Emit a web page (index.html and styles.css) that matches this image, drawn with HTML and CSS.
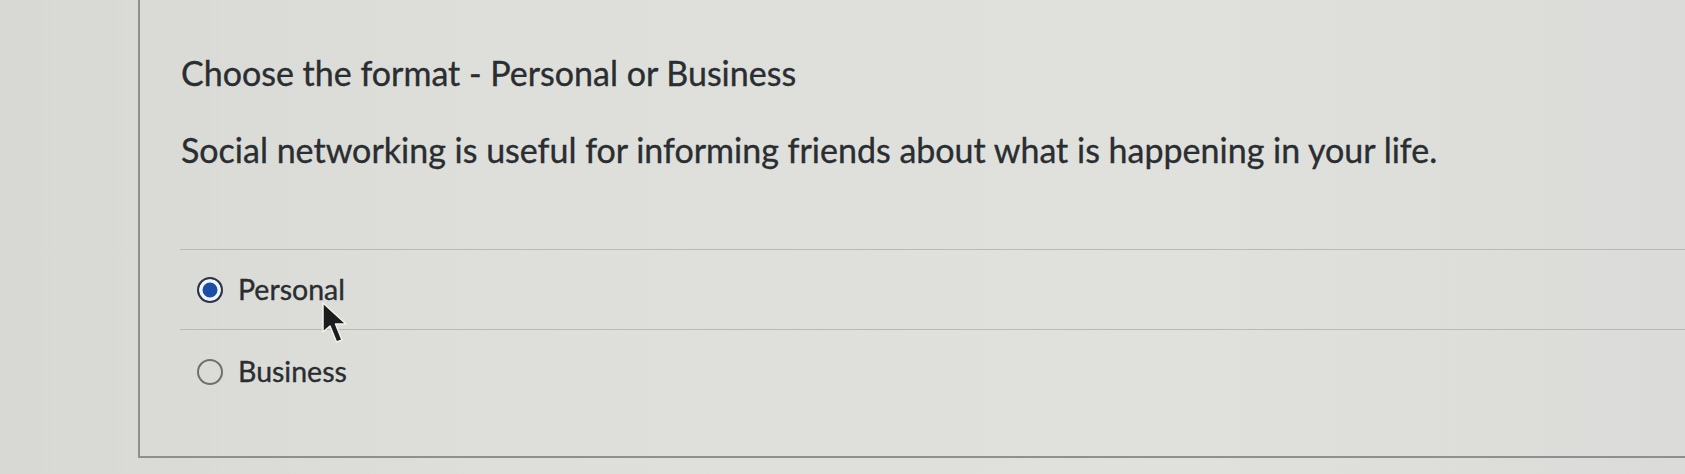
FILE: index.html
```html
<!DOCTYPE html>
<html lang="en">
<head>
<meta charset="utf-8">
<title>Quiz question</title>
<link rel="stylesheet" href="styles.css">
</head>
<body>
<div class="page">
  <div class="question">
    <div class="q-text">
      <p class="q-title">Choose the format - Personal or Business</p>
      <p class="q-body">Social networking is useful for informing friends about what is happening in your life.</p>
    </div>
    <div class="answers">
      <label class="answer">
        <span class="radio checked"></span>
        <span class="label">Personal</span>
      </label>
      <label class="answer">
        <span class="radio"></span>
        <span class="label">Business</span>
      </label>
    </div>
  </div>
  <svg class="cursor" width="30" height="46" viewBox="0 0 30 46">
    <path d="M2 2 L2 31 L9 25 L15.5 41 L21 39 L14.5 23 L25 23 Z" fill="#1c1c1e" stroke="#f2f2ee" stroke-width="1.5" stroke-linejoin="round"/>
  </svg>
</div>
</body>
</html>
```
FILE: styles.css
```css
html, body {
  margin: 0;
  padding: 0;
}
body {
  width: 1685px;
  height: 474px;
  overflow: hidden;
  background: linear-gradient(90deg, #d8d9d4 0%, #dedfda 30%, #e0e1dc 70%, #dbdcd9 100%);
  font-family: Lato, "Open Sans", sans-serif;
  color: #2a2d31;
  -webkit-text-stroke: 0.35px #2a2d31;
}
.page {
  position: relative;
  height: 474px;
  padding-left: 138px;
  box-sizing: border-box;
}
.question {
  height: 458px;
  box-sizing: border-box;
  border-left: 2px solid #8e908e;
  border-bottom: 2px solid #8e908e;
  padding-left: 40px;
  display: flex;
  flex-direction: column;
}
.q-text {
  padding-top: 51px;
  height: 249px;
  box-sizing: border-box;
  padding-left: 1px;
}
.q-title {
  margin: 0;
  font-size: 34px;
  line-height: 44px;
}
.q-body {
  margin: 33px 0 0;
  font-size: 34px;
  line-height: 44px;
}
.answers {
  display: flex;
  flex-direction: column;
}
.answer {
  display: flex;
  align-items: center;
  gap: 15px;
  height: 79px;
  padding-left: 17px;
  border-top: 1.5px solid #b9bab5;
}
.answer + .answer {
  height: 84px;
}
.radio {
  width: 22px;
  height: 22px;
  border-radius: 50%;
  border: 2px solid #6e6f70;
  box-sizing: content-box;
  flex: none;
}
.radio.checked {
  border: 2.5px solid #2b3544;
  background: #1d4ea6;
  box-shadow: inset 0 0 0 3.5px #f3f4f6;
}
.label {
  font-size: 28.5px;
  line-height: 34px;
  padding-bottom: 2px;
}
.cursor {
  position: absolute;
  left: 321px;
  top: 301px;
}
```
